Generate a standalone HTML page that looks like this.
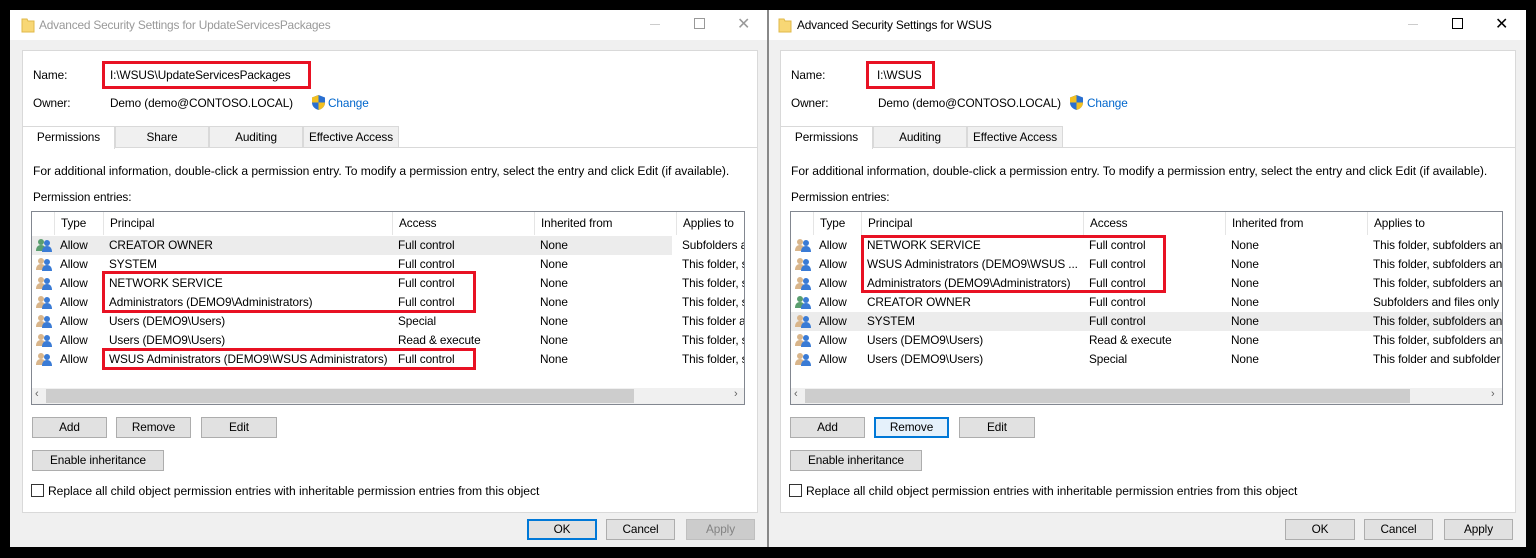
<!DOCTYPE html>
<html><head><meta charset="utf-8">
<style>
*{box-sizing:border-box;margin:0;padding:0}
body{width:1536px;height:558px;background:#000;position:relative;overflow:hidden;font-family:"Liberation Sans",sans-serif;font-size:11.8px;color:#000;letter-spacing:-0.1px}
.a{position:absolute;white-space:nowrap}
.win{position:absolute;top:10px;height:537px;width:757px;background:#f0f0f0}
.tb{position:absolute;left:0;top:0;width:100%;height:30px;background:#fff}
.panel{position:absolute;background:#fff;border:1px solid #d9d9d9}
.tab{position:absolute;top:116px;height:22px;border:1px solid #d9d9d9;background:#f0f0f0;text-align:center;line-height:20px}
.tab.sel{background:#fff;border-bottom:none;height:23px}
.list{position:absolute;border:1px solid #828790;background:#fff;overflow:hidden}
.hd{position:absolute;top:0;height:23px;line-height:22px;padding-left:6px;border-right:1px solid #e5e5e5}
.row{position:absolute;left:0;height:19px;line-height:18px;width:100%}
.row span{position:absolute;top:0;white-space:nowrap}
.btn{position:absolute;height:21px;background:#e1e1e1;border:1px solid #adadad;text-align:center;line-height:19px}
.red{position:absolute;border:3px solid #e81123}
.chk{position:absolute;width:13px;height:13px;border:1px solid #333;background:#fff}
.sb{position:absolute;height:16px;background:#f0f0f0}
.ttl{font-size:11.9px;letter-spacing:-0.2px}
.info{font-size:12.1px;letter-spacing:-0.05px}
</style></head><body>

<!-- LEFT WINDOW -->
<div class="win" style="left:10px">
 <div class="tb">
  <svg class="a" style="left:11px;top:7px" width="14" height="16"><path d="M1 2h5l1 2h6v11H1z" fill="#f8d775" stroke="#e0b94a"/></svg>
  <div class="a ttl" style="left:29px;top:8px;color:#999">Advanced Security Settings for UpdateServicesPackages</div>
  <div class="a" style="left:640px;top:14px;width:10px;height:1px;background:#ccc"></div>
  <div class="a" style="left:684px;top:8px;width:11px;height:11px;border:1px solid #999"></div>
  <div class="a" style="left:727px;top:4px;color:#999;font-size:16px">✕</div>
 </div>
 <div class="panel" style="left:12px;top:40px;width:736px;height:463px"></div>
 <div class="a" style="left:12px;top:137px;width:736px;height:1px;background:#d9d9d9"></div>
 <div class="a" style="left:23px;top:58px">Name:</div>
 <div class="a" style="left:100px;top:58px">I:\WSUS\UpdateServicesPackages</div>
 <div class="red" style="left:92px;top:51px;width:209px;height:28px"></div>
 <div class="a" style="left:23px;top:86px">Owner:</div>
 <div class="a" style="left:100px;top:86px">Demo (demo@CONTOSO.LOCAL)</div>
 <svg class="a" style="left:301px;top:84px" width="15" height="17"><path d="M7.5 1L1 3.5v5c0 4 3 6.5 6.5 7.5 3.5-1 6.5-3.5 6.5-7.5v-5z" fill="#2a6fd0"/><path d="M7.5 1v7.5H1v-5zM7.5 8.5H14c0 4-3 6.5-6.5 7.5z" fill="#f3c020"/></svg>
 <div class="a" style="left:318px;top:86px;color:#0066cc">Change</div>
 <div class="tab sel" style="left:12px;width:93px">Permissions</div>
 <div class="tab" style="left:105px;width:94px">Share</div>
 <div class="tab" style="left:199px;width:94px">Auditing</div>
 <div class="tab" style="left:293px;width:96px">Effective Access</div>
 <div class="a info" style="left:23px;top:154px">For additional information, double-click a permission entry. To modify a permission entry, select the entry and click Edit (if available).</div>
 <div class="a" style="left:23px;top:180px">Permission entries:</div>
 <div class="list" style="left:21px;top:201px;width:714px;height:194px">
  <div class="hd" style="left:0;width:23px"></div>
  <div class="hd" style="left:23px;width:49px">Type</div>
  <div class="hd" style="left:72px;width:289px">Principal</div>
  <div class="hd" style="left:361px;width:142px">Access</div>
  <div class="hd" style="left:503px;width:142px">Inherited from</div>
  <div class="hd" style="left:645px;width:80px">Applies to</div>
  <div class="row" style="top:24px;background:#ececec;width:640px"></div>
  <div id="L"></div>
  <div class="sb" style="left:0;top:176px;width:712px"></div>
  <div class="a" style="left:14px;top:177px;width:588px;height:14px;background:#cdcdcd"></div>
  <div class="a" style="left:3px;top:176px;color:#606060;font-size:11px">‹</div>
  <div class="a" style="left:702px;top:176px;color:#606060;font-size:11px">›</div>
 </div>
 <div class="red" style="left:92px;top:261px;width:374px;height:42px"></div>
 <div class="red" style="left:92px;top:338px;width:374px;height:22px"></div>
 <div class="btn" style="left:22px;top:407px;width:75px">Add</div>
 <div class="btn" style="left:106px;top:407px;width:75px">Remove</div>
 <div class="btn" style="left:191px;top:407px;width:76px">Edit</div>
 <div class="btn" style="left:22px;top:440px;width:132px">Enable inheritance</div>
 <div class="chk" style="left:21px;top:474px"></div>
 <div class="a info" style="left:38px;top:474px">Replace all child object permission entries with inheritable permission entries from this object</div>
 <div class="btn" style="left:517px;top:509px;width:70px;border:2px solid #0078d7;line-height:17px">OK</div>
 <div class="btn" style="left:596px;top:509px;width:69px">Cancel</div>
 <div class="btn" style="left:676px;top:509px;width:69px;background:#cccccc;border-color:#bfbfbf;color:#838383">Apply</div>
</div>
<div class="a" style="left:767px;top:10px;width:2px;height:537px;background:#888"></div>

<!-- RIGHT WINDOW -->
<div class="win" style="left:769px">
 <div class="tb">
  <svg class="a" style="left:9px;top:7px" width="14" height="16"><path d="M1 2h5l1 2h6v11H1z" fill="#f8d775" stroke="#e0b94a"/></svg>
  <div class="a ttl" style="left:28px;top:8px">Advanced Security Settings for WSUS</div>
  <div class="a" style="left:639px;top:14px;width:10px;height:1px;background:#ccc"></div>
  <div class="a" style="left:683px;top:8px;width:11px;height:11px;border:1px solid #000"></div>
  <div class="a" style="left:726px;top:4px;font-size:16px">✕</div>
 </div>
 <div class="panel" style="left:11px;top:40px;width:736px;height:463px"></div>
 <div class="a" style="left:11px;top:137px;width:736px;height:1px;background:#d9d9d9"></div>
 <div class="a" style="left:22px;top:58px">Name:</div>
 <div class="a" style="left:108px;top:58px">I:\WSUS</div>
 <div class="red" style="left:97px;top:51px;width:69px;height:28px"></div>
 <div class="a" style="left:22px;top:86px">Owner:</div>
 <div class="a" style="left:109px;top:86px">Demo (demo@CONTOSO.LOCAL)</div>
 <svg class="a" style="left:300px;top:84px" width="15" height="17"><path d="M7.5 1L1 3.5v5c0 4 3 6.5 6.5 7.5 3.5-1 6.5-3.5 6.5-7.5v-5z" fill="#2a6fd0"/><path d="M7.5 1v7.5H1v-5zM7.5 8.5H14c0 4-3 6.5-6.5 7.5z" fill="#f3c020"/></svg>
 <div class="a" style="left:318px;top:86px;color:#0066cc">Change</div>
 <div class="tab sel" style="left:11px;width:93px">Permissions</div>
 <div class="tab" style="left:104px;width:94px">Auditing</div>
 <div class="tab" style="left:198px;width:96px">Effective Access</div>
 <div class="a info" style="left:22px;top:154px">For additional information, double-click a permission entry. To modify a permission entry, select the entry and click Edit (if available).</div>
 <div class="a" style="left:22px;top:180px">Permission entries:</div>
 <div class="list" style="left:21px;top:201px;width:713px;height:194px">
  <div class="hd" style="left:0;width:23px"></div>
  <div class="hd" style="left:23px;width:48px">Type</div>
  <div class="hd" style="left:71px;width:222px">Principal</div>
  <div class="hd" style="left:293px;width:142px">Access</div>
  <div class="hd" style="left:435px;width:142px">Inherited from</div>
  <div class="hd" style="left:577px;width:140px">Applies to</div>
  <div class="row" style="top:100px;background:#ececec"></div>
  <div id="R"></div>
  <div class="sb" style="left:0;top:176px;width:711px"></div>
  <div class="a" style="left:14px;top:177px;width:605px;height:14px;background:#cdcdcd"></div>
  <div class="a" style="left:3px;top:176px;color:#606060;font-size:11px">‹</div>
  <div class="a" style="left:700px;top:176px;color:#606060;font-size:11px">›</div>
 </div>
 <div class="red" style="left:92px;top:225px;width:305px;height:58px"></div>
 <div class="btn" style="left:21px;top:407px;width:75px">Add</div>
 <div class="btn" style="left:105px;top:407px;width:75px;background:#e5f1fb;border:2px solid #0078d7;line-height:17px">Remove</div>
 <div class="btn" style="left:190px;top:407px;width:76px">Edit</div>
 <div class="btn" style="left:21px;top:440px;width:132px">Enable inheritance</div>
 <div class="chk" style="left:20px;top:474px"></div>
 <div class="a info" style="left:37px;top:474px">Replace all child object permission entries with inheritable permission entries from this object</div>
 <div class="btn" style="left:516px;top:509px;width:70px">OK</div>
 <div class="btn" style="left:595px;top:509px;width:69px">Cancel</div>
 <div class="btn" style="left:675px;top:509px;width:69px">Apply</div>
</div>

<script>
function ic(g){var c=g?'#5a9e6f':'#d9b58a';return '<svg style="position:absolute;left:3px;top:2px" width="18" height="15"><circle cx="6" cy="4" r="3" fill="'+c+'"/><path d="M1 13c0-4 2-6 5-6s5 2 5 6z" fill="'+c+'"/><circle cx="12" cy="5" r="3" fill="#3a7bd5"/><path d="M7 14c0-4 2-6 5-6s5 2 5 6z" fill="#3a7bd5"/></svg>';}
function fill2(id,cols,rows){var h='';rows.forEach(function(r,i){h+='<div class="row" style="top:'+(24+19*i)+'px">'+ic(r[3]);h+='<span style="left:'+cols[0]+'px">Allow</span><span style="left:'+cols[1]+'px">'+r[0]+'</span><span style="left:'+cols[2]+'px">'+r[1]+'</span><span style="left:'+cols[3]+'px">None</span><span style="left:'+cols[4]+'px">'+r[2]+'</span></div>';});document.getElementById(id).outerHTML=h;}
fill2('L',[28,77,366,508,650],[
['CREATOR OWNER','Full control','Subfolders a',1],
['SYSTEM','Full control','This folder, s',0],
['NETWORK SERVICE','Full control','This folder, s',0],
['Administrators (DEMO9\\Administrators)','Full control','This folder, s',0],
['Users (DEMO9\\Users)','Special','This folder a',0],
['Users (DEMO9\\Users)','Read &amp; execute','This folder, s',0],
['WSUS Administrators (DEMO9\\WSUS Administrators)','Full control','This folder, s',0]]);
fill2('R',[28,76,298,440,582],[
['NETWORK SERVICE','Full control','This folder, subfolders an',0],
['WSUS Administrators (DEMO9\\WSUS ...','Full control','This folder, subfolders an',0],
['Administrators (DEMO9\\Administrators)','Full control','This folder, subfolders an',0],
['CREATOR OWNER','Full control','Subfolders and files only',1],
['SYSTEM','Full control','This folder, subfolders an',0],
['Users (DEMO9\\Users)','Read &amp; execute','This folder, subfolders an',0],
['Users (DEMO9\\Users)','Special','This folder and subfolder',0]]);
</script>
</body></html>
